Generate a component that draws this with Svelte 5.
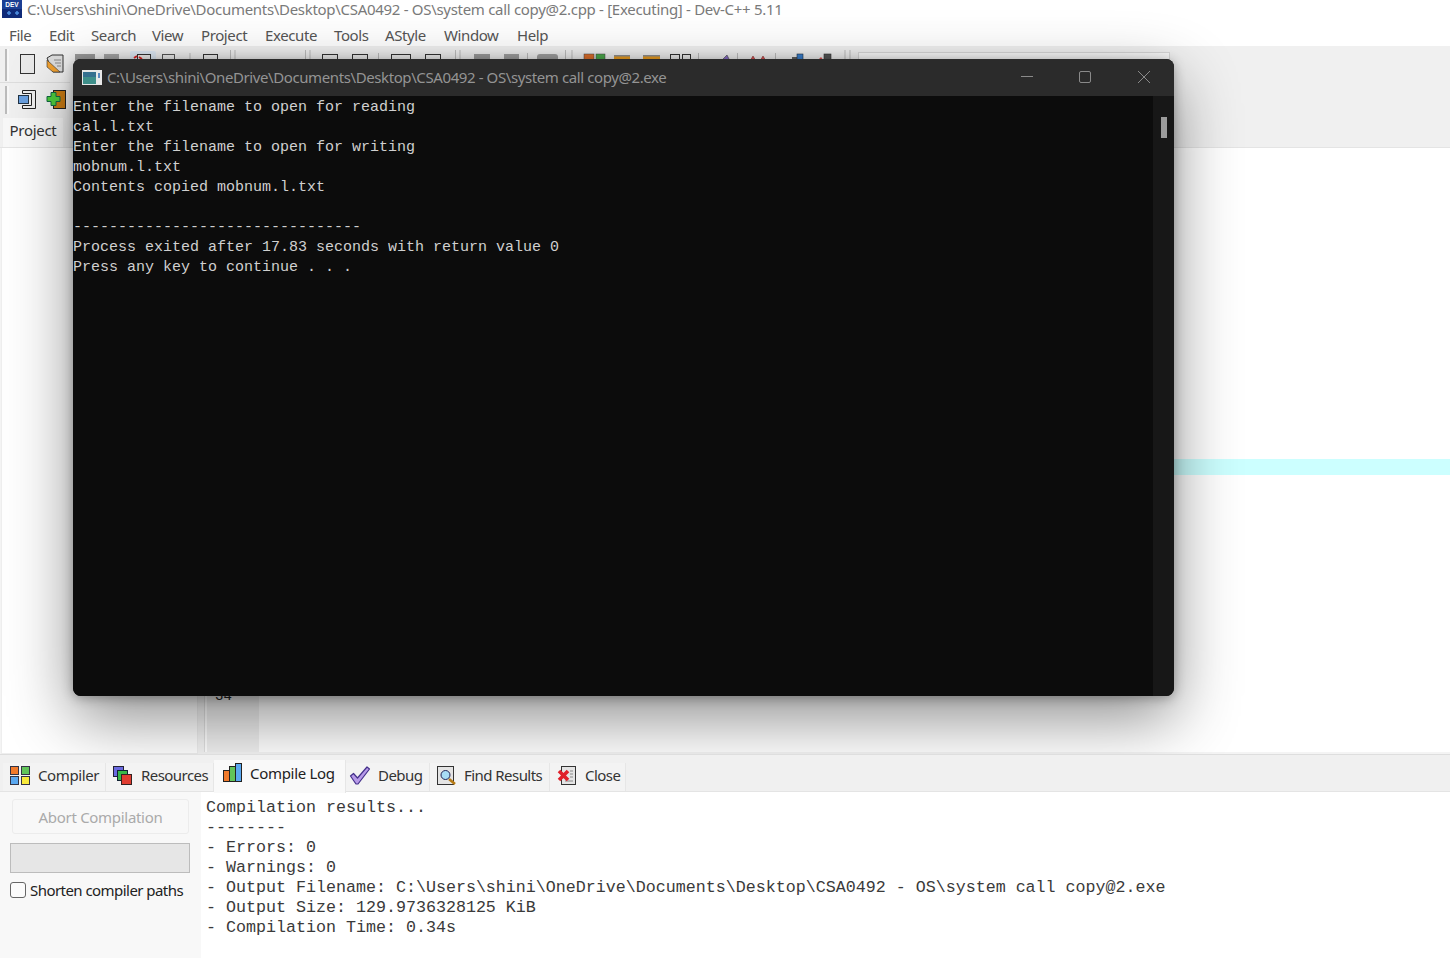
<script>
  const menus = ['File','Edit','Search','View','Project','Execute','Tools','AStyle','Window','Help'];
  const consoleLines = [
    'Enter the filename to open for reading',
    'cal.l.txt',
    'Enter the filename to open for writing',
    'mobnum.l.txt',
    'Contents copied mobnum.l.txt',
    '',
    '--------------------------------',
    'Process exited after 17.83 seconds with return value 0',
    'Press any key to continue . . . '
  ];
  const logLines = [
    'Compilation results...',
    '--------',
    '- Errors: 0',
    '- Warnings: 0',
    '- Output Filename: C:\\Users\\shini\\OneDrive\\Documents\\Desktop\\CSA0492 - OS\\system call copy@2.exe',
    '- Output Size: 129.9736328125 KiB',
    '- Compilation Time: 0.34s'
  ];
</script>

<div class="app">
  <header class="titlebar">
    <svg class="appicon" width="20" height="18" viewBox="0 0 20 18">
      <rect width="20" height="18" fill="#1c3f94"/>
      <rect y="9" width="20" height="9" fill="#0f2a78"/>
      <text x="10" y="7" text-anchor="middle" class="devtext">DEV</text>
      <path d="M5 13h4M13 13h4M7 11v4M15 11v4" stroke="#4d8fe0" stroke-width="1.5"/>
    </svg>
    <span class="apptitle">C:\Users\shini\OneDrive\Documents\Desktop\CSA0492 - OS\system call copy@2.cpp - [Executing] - Dev-C++ 5.11</span>
  </header>

  <nav class="menubar">
    {#each menus as m}<span>{m}</span>{/each}
  </nav>

  <section class="toolbars">
    <svg class="strip" width="1172" height="37" viewBox="0 46 1172 37">
      <path d="M6 49v32" stroke="#aaa" stroke-width="1.5"/>
      <path d="M8 49v32" stroke="#fff"/>
      <path d="M0 82.5h70" stroke="#ddd"/>
      <rect x="20.5" y="54.5" width="14" height="19" fill="#e9e9e9" stroke="#333"/>
      <path d="M47 58l5-3h11v17h-10z" fill="#ddd" stroke="#333"/>
      <path d="M47 60l13 12h-7l-6-5z" fill="#f0a030" stroke="#333" stroke-width=".6"/>
      <path d="M54 60h7M55 63h6M57 66h4" stroke="#888"/>
      <rect x="75" y="54" width="20" height="8" fill="#9a9a9a"/>
      <rect x="104" y="54" width="15" height="8" fill="#a6a6a6"/>
      <rect x="130" y="51" width="26" height="10" rx="2" fill="#dfeaf5"/>
      <rect x="137.5" y="54.5" width="13" height="8" fill="#eee" stroke="#333"/>
      <path d="M134 58l3-2M139 57l3 2" stroke="#d22" stroke-width="2"/>
      <rect x="162.5" y="54.5" width="12" height="8" fill="#eee" stroke="#555"/>
      <rect x="203.5" y="54.5" width="14" height="8" fill="#eee" stroke="#333"/>
      <rect x="322.5" y="54.5" width="15" height="8" fill="#eee" stroke="#333"/>
      <rect x="352.5" y="54.5" width="15" height="8" fill="#eee" stroke="#333"/>
      <rect x="391.5" y="54.5" width="19" height="8" fill="#eee" stroke="#333"/>
      <rect x="425.5" y="54.5" width="15" height="8" fill="#eee" stroke="#333"/>
      <rect x="474" y="54" width="16" height="8" fill="#9c9c9c"/>
      <rect x="504" y="54" width="15" height="8" fill="#a0a0a0"/>
      <rect x="537" y="54" width="21" height="8" rx="3" fill="#a0a0a0"/>
      <rect x="584" y="54" width="10" height="8" fill="#e0702c" stroke="#444" stroke-width=".5"/>
      <rect x="596" y="54" width="9" height="8" fill="#4cab4c" stroke="#444" stroke-width=".5"/>
      <path d="M614 56h16M643 56h17" stroke="#333" stroke-width="1.2"/>
      <rect x="614" y="56.5" width="16" height="6" fill="#f0a020"/>
      <rect x="643" y="56.5" width="17" height="6" fill="#f0a020"/>
      <rect x="670.5" y="54.5" width="9" height="8" fill="#eee" stroke="#333"/>
      <rect x="682.5" y="54.5" width="8" height="8" fill="#eee" stroke="#333"/>
      <path d="M722 60l5-5 3 6z" fill="#8a6fc8" stroke="#444" stroke-width=".6"/>
      <path d="M750 61l3-5 3 5zM760 61l3-5 3 5z" fill="#e05050" stroke="#833" stroke-width=".6"/>
      <path d="M792 58h7" stroke="#333" stroke-width="1.5"/>
      <rect x="797" y="54" width="6" height="7" fill="#3a80d0" stroke="#234" stroke-width=".6"/>
      <path d="M817 61l4-4 3 4z" fill="#e05050"/>
      <rect x="824" y="54" width="7" height="6" fill="#555" stroke="#333" stroke-width=".6"/>
      <path d="M190 53v8M230.5 50v11M235 50v11M305.5 50v11M310 50v11M378.5 53v8M455.5 50v11M460 50v11M527.5 53v8M565.5 50v11M572 50v11M698.5 53v8M737.5 53v8M775.5 53v8M845 50v11M850 50v11" stroke="#bdbdbd"/>
      <rect x="858.5" y="52.5" width="311" height="20" fill="#fafafa" stroke="#d8d8d8"/>
    </svg>
    <svg class="strip" width="70" height="33" viewBox="0 83 70 33">
      <path d="M6 86v28" stroke="#aaa" stroke-width="1.5"/>
      <path d="M8 86v28" stroke="#fff"/>
      <path d="M22.5 90.5h13v18h-13v-3h9v-12h-9z" fill="#efefef" stroke="#222"/>
      <rect x="18.5" y="95.5" width="10" height="8" fill="#6aa0e0" stroke="#234"/>
      <rect x="53.5" y="90.5" width="12" height="18" fill="#c77a14" stroke="#222"/>
      <path d="M51 92.500h5v4h4v5h-4v4h-5v-4h-4v-5h4z" fill="#4dcc3d" stroke="#164" stroke-width="1"/>
    </svg>
    <div class="sidetabs"><span class="sidetab">Project</span></div>
  </section>

  <main class="workspace">
    <aside class="browser"></aside>
    <section class="editor">
      <div class="gutter"><span class="lineno">34</span></div>
      <div class="code"><div class="activeline"></div></div>
    </section>
  </main>

  <section class="bottom">
    <div class="tabs">
      <div class="tab">
        <svg width="22" height="21" viewBox="0 0 22 21"><rect x="1.500" y="1.500" width="8" height="8" fill="#f07a2c" stroke="#334"/><rect x="12.500" y="1.500" width="8" height="8" fill="#62c45a" stroke="#334"/><rect x="1.500" y="11.500" width="8" height="8" fill="#5aa8f0" stroke="#334"/><rect x="12.500" y="11.500" width="8" height="8" fill="#f8ea3c" stroke="#334"/></svg>
        <span>Compiler</span>
      </div>
      <div class="tab res">
        <svg width="22" height="21" viewBox="0 0 22 21"><rect x="1.500" y="1.500" width="10" height="10" fill="#6a6ae0" stroke="#223"/><rect x="5.500" y="5.500" width="10" height="10" fill="#38b848" stroke="#123"/><rect x="9.500" y="9.500" width="10" height="10" fill="#e03c30" stroke="#322"/></svg>
        <span>Resources</span>
      </div>
      <div class="tab active">
        <svg width="22" height="21" viewBox="0 0 22 21"><rect x="1.500" y="8.500" width="6" height="11" fill="#f07a2c" stroke="#222"/><rect x="7.500" y="4.500" width="6" height="15" fill="#62c45a" stroke="#222"/><rect x="13.500" y="1.500" width="6" height="18" fill="#5aa8f0" stroke="#222"/></svg>
        <span>Compile Log</span>
      </div>
      <div class="tab dbg">
        <svg width="22" height="21" viewBox="0 0 22 21"><path d="M1.500 11l3-2.500 4 4.500L18 2l2.500 2L9 19h-2z" fill="#b79ae8" stroke="#43308a" stroke-width="1.200" stroke-linejoin="round"/></svg>
        <span>Debug</span>
      </div>
      <div class="tab">
        <svg width="22" height="21" viewBox="0 0 22 21"><rect x="1.500" y="1.500" width="16" height="18" fill="#e4e4e4" stroke="#333"/><circle cx="9.500" cy="10" r="4.500" fill="#a8dcf5" stroke="#225"/><path d="M13 14l6 5" stroke="#b67a14" stroke-width="2.600"/></svg>
        <span>Find Results</span>
      </div>
      <div class="tab res">
        <svg width="22" height="21" viewBox="0 0 22 21"><rect x="5.500" y="1.500" width="14" height="18" fill="#e4e4e4" stroke="#333"/><path d="M14 6h3M14 9h3M14 12h3M9 16h8" stroke="#888"/><path d="M3 6l9 9M12 6l-9 9" stroke="#e0202a" stroke-width="3.600"/></svg>
        <span>Close</span>
      </div>
    </div>
    <div class="panel">
      <div class="controls">
        <button class="abort" disabled>Abort Compilation</button>
        <div class="progress"></div>
        <label class="shorten"><span class="check"></span>Shorten compiler paths</label>
      </div>
      <pre class="log">{logLines.join('\n')}</pre>
    </div>
  </section>

  <div class="console">
    <div class="contitle">
      <svg width="20" height="15" viewBox="0 0 20 15"><rect width="20" height="15" fill="#e8e8e8"/><rect x="1" y="2" width="13" height="12" fill="#3f8f8a"/><rect x="1" y="2" width="13" height="5" fill="#35708f"/><rect x="16" y="3" width="2" height="5" fill="#5a8ac0"/></svg>
      <span class="context">C:\Users\shini\OneDrive\Documents\Desktop\CSA0492 - OS\system call copy@2.exe</span>
      <svg class="winbtns" width="130" height="14" viewBox="0 0 130 14">
        <path d="M0 6.500h12" stroke="#8a8a8a"/>
        <rect x="58.500" y="1.500" width="11" height="11" rx="1.500" fill="none" stroke="#8a8a8a"/>
        <path d="M117 1l12 12M129 1l-12 12" stroke="#8a8a8a"/>
      </svg>
    </div>
    <div class="conbody">
      <pre class="conout">{consoleLines.join('\n')}</pre>
      <div class="scroll"><div class="thumb"></div></div>
    </div>
  </div>
</div>

<style>
  :global(body) { margin: 0; background: #fff; }
  .app {
    position: relative;
    width: 1450px;
    height: 958px;
    overflow: hidden;
    display: flex;
    flex-direction: column;
    background: #f0f0f0;
    font-family: "Noto Sans", "Open Sans", sans-serif;
    font-size: 15px;
  }
  .titlebar {
    height: 20px;
    flex: none;
    background: #fff;
    display: flex;
    align-items: flex-start;
    padding-left: 2px;
    gap: 5px;
  }
  .appicon { flex: none; }
  .devtext { font: bold 6.500px "Liberation Sans", sans-serif; fill: #fff; }
  .apptitle {
    color: #7a7a7a;
    line-height: 18px;
    letter-spacing: -0.3px;
    white-space: nowrap;
  }
  .menubar {
    height: 26px;
    flex: none;
    box-sizing: border-box;
    background: #fff;
    padding: 3px 0 0 9px;
    display: grid;
    grid-template-columns: 40px 42px 61px 49px 64px 69px 51px 59px 73px 40px;
    align-items: center;
    color: #555;
    letter-spacing: -0.4px;
    line-height: 22px;
  }
  .toolbars {
    height: 101px;
    flex: none;
    box-sizing: border-box;
    display: flex;
    flex-direction: column;
    background: #f0f0f0;
  }
  .strip { display: block; flex: none; }
  .sidetabs { margin-top: 2px; height: 29px; padding-left: 3px; display: flex; }
  .sidetab {
    width: 60px;
    text-align: center;
    background: #f8f8f8;
    color: #333;
    line-height: 25px;
    letter-spacing: -0.3px;
  }
  .workspace {
    flex: 1;
    display: flex;
    min-height: 0;
    border-top: 1px solid #e4e4e4;
    background: #f4f4f4;
  }
  .browser {
    width: 197px;
    margin: 0 6px 0 1px;
    box-sizing: border-box;
    background: #fff;
    border: 1px solid #eeeeee;
    border-top: none;
  }
  .editor {
    flex: 1;
    display: flex;
    background: #fff;
    padding-left: 2px;
    margin-bottom: 2px;
    border-left: 1px solid #e0e0e0;
  }
  .gutter {
    width: 52px;
    background: #f0f0f0;
    position: relative;
    font: 14px "Liberation Mono", monospace;
    color: #222;
  }
  .lineno { position: absolute; left: 8px; top: 540px; }
  .code { flex: 1; padding-top: 311px; }
  .activeline { height: 16px; background: #ccffff; }
  .bottom {
    position: relative;
    z-index: 2;
    height: 204px;
    flex: none;
    display: flex;
    flex-direction: column;
    background: #f8f8f8;
  }
  .tabs {
    height: 38px;
    flex: none;
    box-sizing: border-box;
    background: #f0f0f0;
    border-top: 1px solid #dedede;
    border-bottom: 1px solid #e4e4e4;
    padding: 8px 0 0 3px;
    display: grid;
    grid-template-columns: 103px 108px 132px 84px 120px 76px;
    color: #333;
    letter-spacing: -0.55px;
  }
  .tab {
    height: 28px;
    display: flex;
    align-items: center;
    gap: 6px;
    padding: 0 0 4px 6px;
    box-sizing: border-box;
    background: #f3f3f3;
    border-right: 1px solid #e6e6e6;
  }
  .tab:first-child { gap: 7px; letter-spacing: -0.4px; }
  .tab.res { gap: 7px; }
  .tab.dbg { padding-left: 3px; gap: 7px; }
  .tab.active {
    background: #f9f9f9;
    margin-top: -3px;
    height: 33px;
    padding: 0 0 8px 8px;
    gap: 6px;
    position: relative;
    color: #222;
    letter-spacing: -0.3px;
  }
  .panel { flex: 1; display: flex; min-height: 0; }
  .controls {
    width: 201px;
    flex: none;
    box-sizing: border-box;
    padding: 7px 0 0 10px;
    display: flex;
    flex-direction: column;
  }
  .abort {
    width: 177px;
    height: 35px;
    margin-left: 2px;
    background: #f8f8f8;
    border: 1px solid #ececec;
    border-radius: 3px;
    font: inherit;
    letter-spacing: -0.3px;
    color: #aaa;
    padding: 0;
  }
  .progress {
    width: 180px;
    height: 30px;
    margin-top: 9px;
    box-sizing: border-box;
    background: #e6e6e6;
    border: 1px solid #bcbcbc;
  }
  .shorten {
    display: flex;
    align-items: center;
    gap: 4px;
    margin-top: 7px;
    color: #222;
    letter-spacing: -0.55px;
  }
  .check {
    width: 16px;
    height: 16px;
    box-sizing: border-box;
    border: 1px solid #666;
    border-radius: 3px;
    background: #fbfbfb;
  }
  .log {
    flex: 1;
    margin: 0;
    padding: 6px 0 0 5px;
    background: #fff;
    font: 16.67px/20px "Liberation Mono", monospace;
    color: #3a3a3a;
  }
  .console {
    position: absolute;
    left: 73px;
    top: 59px;
    width: 1101px;
    height: 637px;
    border-radius: 8px;
    overflow: hidden;
    display: flex;
    flex-direction: column;
    background: #0c0c0c;
    box-shadow: 0 22px 64px rgba(0,0,0,.45), 0 2px 12px rgba(0,0,0,.3);
  }
  .contitle {
    height: 37px;
    flex: none;
    background: #2b2b2b;
    display: flex;
    align-items: center;
    padding-left: 9px;
    gap: 5px;
    color: #949494;
  }
  .context { flex: 1; letter-spacing: -0.4px; white-space: nowrap; padding-bottom: 2px; }
  .winbtns { margin: 0 23px 2px 0; flex: none; }
  .conbody { flex: 1; display: flex; min-height: 0; }
  .conout {
    flex: 1;
    margin: 0;
    padding-top: 2px;
    background: #0c0c0c;
    font: 15px/20px "Liberation Mono", monospace;
    color: #d0d0d0;
  }
  .scroll { width: 21px; flex: none; background: #171717; padding: 21px 0 0 8px; box-sizing: border-box; }
  .thumb { width: 6px; height: 21px; background: #9b9b9b; }
</style>
